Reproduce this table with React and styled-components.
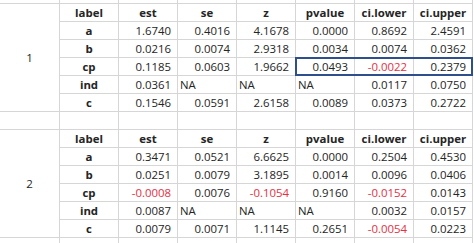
import React from "react";
import styled, { createGlobalStyle } from "styled-components";

const Global = createGlobalStyle`
  html, body { margin: 0; padding: 0; background: #ffffff; overflow: hidden; }
  body { font-family: "Open Sans", "Liberation Sans", sans-serif; }
`;

const Sheet = styled.div`
  position: relative;
  display: grid;
  grid-template-columns: 60px repeat(7, 59px);
  grid-template-rows: 4px repeat(13, 18px) 12px;
  width: 474px;
  color: #252525;
  font-size: 11.4px;
`;

const Cell = styled.div`
  box-sizing: border-box;
  border-right: 1px solid #d6d6d6;
  border-bottom: 1px solid #d6d6d6;
  display: flex;
  align-items: center;
  justify-content: ${(p) =>
    p.$align === "right" ? "flex-end" : p.$align === "left" ? "flex-start" : "center"};
  padding: ${(p) => (p.$align === "right" ? "1px 6px 0 0" : p.$align === "left" ? "1px 0 0 2px" : "1px 0 0 0")};
  font-weight: ${(p) => (p.$bold ? 700 : 400)};
  color: ${(p) => (p.$neg ? "#e5303f" : "#252525")};
  white-space: nowrap;
  overflow: hidden;
  line-height: 1;
`;

const IndexCell = styled(Cell)`
  grid-row: span 6;
  font-size: 11.5px;
`;

const Selection = styled.div`
  position: absolute;
  grid-column: 6 / 9;
  grid-row: ${(p) => `${p.$row} / ${p.$row + 1}`};
  top: -1px;
  left: -1px;
  right: 0;
  bottom: 0;
  border: 2px solid #2f4f8c;
  pointer-events: none;
`;

const headers = ["label", "est", "se", "z", "pvalue", "ci.lower", "ci.upper"];

const blocks = [
  {
    id: "1",
    rows: [
      ["a", "1.6740", "0.4016", "4.1678", "0.0000", "0.8692", "2.4591"],
      ["b", "0.0216", "0.0074", "2.9318", "0.0034", "0.0074", "0.0362"],
      ["cp", "0.1185", "0.0603", "1.9662", "0.0493", "-0.0022", "0.2379"],
      ["ind", "0.0361", "NA", "NA", "NA", "0.0117", "0.0750"],
      ["c", "0.1546", "0.0591", "2.6158", "0.0089", "0.0373", "0.2722"],
    ],
  },
  {
    id: "2",
    rows: [
      ["a", "0.3471", "0.0521", "6.6625", "0.0000", "0.2504", "0.4530"],
      ["b", "0.0251", "0.0079", "3.1895", "0.0014", "0.0096", "0.0406"],
      ["cp", "-0.0008", "0.0076", "-0.1054", "0.9160", "-0.0152", "0.0143"],
      ["ind", "0.0087", "NA", "NA", "NA", "0.0032", "0.0157"],
      ["c", "0.0079", "0.0071", "1.1145", "0.2651", "-0.0054", "0.0223"],
    ],
  },
];

const EmptyRow = ({ k }) =>
  Array.from({ length: 8 }, (_, i) => <Cell key={`${k}-${i}`} />);

function ValueCell({ v }) {
  if (v === "NA") return <Cell $align="left">NA</Cell>;
  return (
    <Cell $align="right" $neg={v.startsWith("-")}>
      {v}
    </Cell>
  );
}

function Block({ block }) {
  return (
    <>
      <IndexCell>{block.id}</IndexCell>
      {headers.map((h) => (
        <Cell key={h} $bold>
          {h}
        </Cell>
      ))}
      {block.rows.map((r) => (
        <React.Fragment key={r[0]}>
          <Cell $bold>{r[0]}</Cell>
          {r.slice(1).map((v, i) => (
            <ValueCell key={i} v={v} />
          ))}
        </React.Fragment>
      ))}
    </>
  );
}

export default function App() {
  return (
    <>
      <Global />
      <Sheet>
        <EmptyRow k="top" />
        <Block block={blocks[0]} />
        <EmptyRow k="mid" />
        <Block block={blocks[1]} />
        <EmptyRow k="bottom" />
        <Selection $row={5} />
      </Sheet>
    </>
  );
}
